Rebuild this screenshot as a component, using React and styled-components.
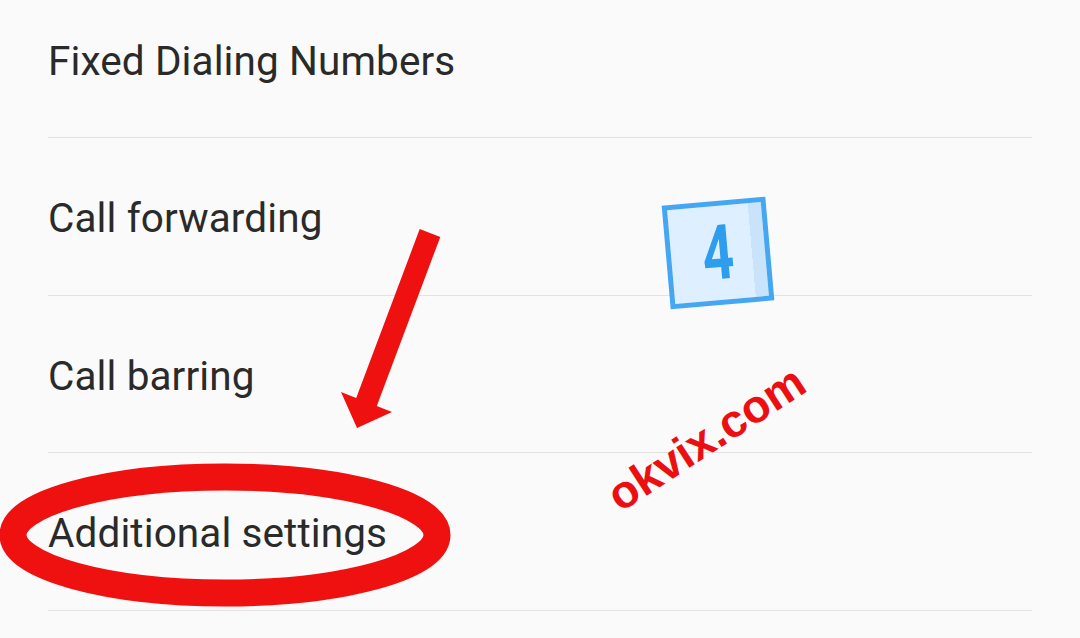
import React from "react"
import styled, { createGlobalStyle } from "styled-components"

const GlobalStyle = createGlobalStyle`
    html, body {
        margin: 0;
        padding: 0;
        background: #fafafa;
    }
    body {
        font-family: Roboto, "Noto Sans", "Liberation Sans", sans-serif;
    }
`

const Page = styled.div`
    position: relative;
    width: 1080px;
    height: 638px;
    overflow: hidden;
    background: #fafafa;
`

// list is scrolled a little, so the first row starts above the top edge
const List = styled.ul`
    list-style: none;
    margin: -19.5px 0 0 0;
    padding: 0 48px;
`

const Row = styled.li`
    height: 157.5px;
    display: flex;
    align-items: center;
    padding-top: 4px;
    border-bottom: 1.5px solid #e2e2e2;
    box-sizing: border-box;
`

const Label = styled.span`
    font-size: 40.5px;
    color: #2a2a2a;
    letter-spacing: 0.1px;
`

const Overlay = styled.svg`
    position: absolute;
    left: 0;
    top: 0;
    pointer-events: none;
`

const StepBadge = styled.div`
    position: absolute;
    left: 666px;
    top: 201px;
    width: 104px;
    height: 104px;
    box-sizing: border-box;
    border: 5px solid #45a6f2;
    background: linear-gradient(90deg, #deefff 0%, #deefff 86%, #c9e3fb 86%, #c9e3fb 100%);
    transform: rotate(-5deg);
    display: flex;
    align-items: center;
    justify-content: center;
    span {
        font-family: Roboto, "Liberation Sans", sans-serif;
        font-weight: 700;
        font-size: 76px;
        line-height: 1;
        color: #2f9ded;
        transform: scaleX(0.72);
    }
`

const Watermark = styled.div`
    position: absolute;
    left: 706px;
    top: 438px;
    transform: translate(-50%, -50%) rotate(-33deg);
    font-family: "Liberation Sans", Arial, sans-serif;
    font-weight: 700;
    font-size: 46px;
    color: #ec0f12;
    white-space: nowrap;
`

const rows = [
    "Fixed Dialing Numbers",
    "Call forwarding",
    "Call barring",
    "Additional settings",
]

function App() {
    return (
        <Page>
            <GlobalStyle />
            <List>
                {rows.map((r) => (
                    <Row key={r}>
                        <Label>{r}</Label>
                    </Row>
                ))}
            </List>

            <Overlay width="1080" height="638" viewBox="0 0 1080 638">
                <polygon
                    points="419.7,229.1 440.3,236.9 376.8,405.9 392,412 357,428 341,392 356.2,398.1"
                    fill="#ef1010"
                />
                <ellipse cx="225" cy="535" rx="212" ry="58" fill="none" stroke="#ef1010" strokeWidth="27" />
            </Overlay>

            <StepBadge>
                <span>4</span>
            </StepBadge>

            <Watermark>okvix.com</Watermark>
        </Page>
    )
}

export default App
